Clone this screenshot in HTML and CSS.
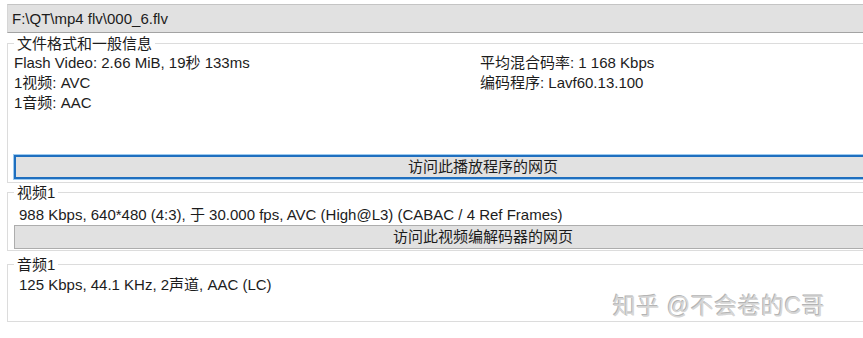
FILE: index.html
```html
<!DOCTYPE html>
<html>
<head>
<meta charset="utf-8">
<link rel="stylesheet" href="styles.css">
</head>
<body>
<div class="page">
  <div class="pathbar">F:\QT\mp4 flv\000_6.flv</div>

  <fieldset class="group g1">
    <legend>文件格式和一般信息</legend>
    <div class="info">
      <div class="col">
        <div class="line">Flash Video: 2.66 MiB, 19秒 133ms</div>
        <div class="line">1视频: AVC</div>
        <div class="line">1音频: AAC</div>
      </div>
      <div class="col">
        <div class="line">平均混合码率: 1 168 Kbps</div>
        <div class="line">编码程序: Lavf60.13.100</div>
      </div>
    </div>
    <div class="btn focused">访问此播放程序的网页</div>
  </fieldset>

  <fieldset class="group g2">
    <legend>视频1</legend>
    <div class="line indent">988 Kbps, 640*480 (4:3), 于 30.000 fps, AVC (High@L3) (CABAC / 4 Ref Frames)</div>
    <div class="btn">访问此视频编解码器的网页</div>
  </fieldset>

  <fieldset class="group g3">
    <legend>音频1</legend>
    <div class="line indent">125 Kbps, 44.1 KHz, 2声道, AAC (LC)</div>
  </fieldset>

  <div class="watermark">知乎 @不会卷的C哥</div>
</div>
</body>
</html>
```

FILE: styles.css
```css
html, body {
  margin: 0;
  padding: 0;
  background: #ffffff;
  overflow: hidden;
}

body {
  font-family: "Liberation Sans", "Noto Sans CJK SC", sans-serif;
  font-size: 15px;
  color: #1c1c1c;
}

.page {
  position: relative;
  box-sizing: border-box;
  width: 952px;
  height: 338px;
  padding: 4px 0 0 7px;
}

.pathbar {
  height: 27px;
  line-height: 27px;
  background: #e1e1e1;
  border-top: 1px solid #c4c4c4;
  border-bottom: 1px solid #a3a3a3;
  border-left: 1px solid #d6d6d6;
  padding-left: 4px;
  font-size: 15px;
}

.group {
  margin: 0;
  border: 1px solid #dcdcdc;
  border-right: none;
  padding: 0 0 0 6px;
  min-width: 0;
}

.group legend {
  padding: 0 3px;
  line-height: 15px;
  font-size: 15px;
}

.g1 {
  margin-top: 3px;
  padding-top: 2px;
  padding-bottom: 3px;
}

.g2 {
  margin-top: 2px;
  padding-top: 5px;
  padding-bottom: 1px;
}

.g3 {
  margin-top: 6px;
  padding-top: 3px;
  padding-bottom: 26px;
}

.info {
  display: grid;
  grid-template-columns: 466px 1fr;
  height: 60px;
}

.line {
  line-height: 20px;
  height: 20px;
  white-space: nowrap;
  font-size: 15px;
}

.indent {
  padding-left: 5px;
}

.btn {
  height: 22px;
  line-height: 22px;
  background: #e1e1e1;
  border: 1px solid #adadad;
  text-align: center;
  font-size: 15px;
}

.btn.focused {
  height: 20px;
  line-height: 20px;
  border: 2px solid #1f6fbf;
  box-shadow: 0 0 0 1px #9ccaf0;
  margin-top: 42px;
}

.watermark {
  position: absolute;
  left: 613px;
  top: 287px;
  font-size: 23px;
  letter-spacing: 0.5px;
  color: #d6d6d6;
  text-shadow: -1px -1px 0 #b4b4b4, 1px 1px 0 #ffffff;
  white-space: nowrap;
}
```
